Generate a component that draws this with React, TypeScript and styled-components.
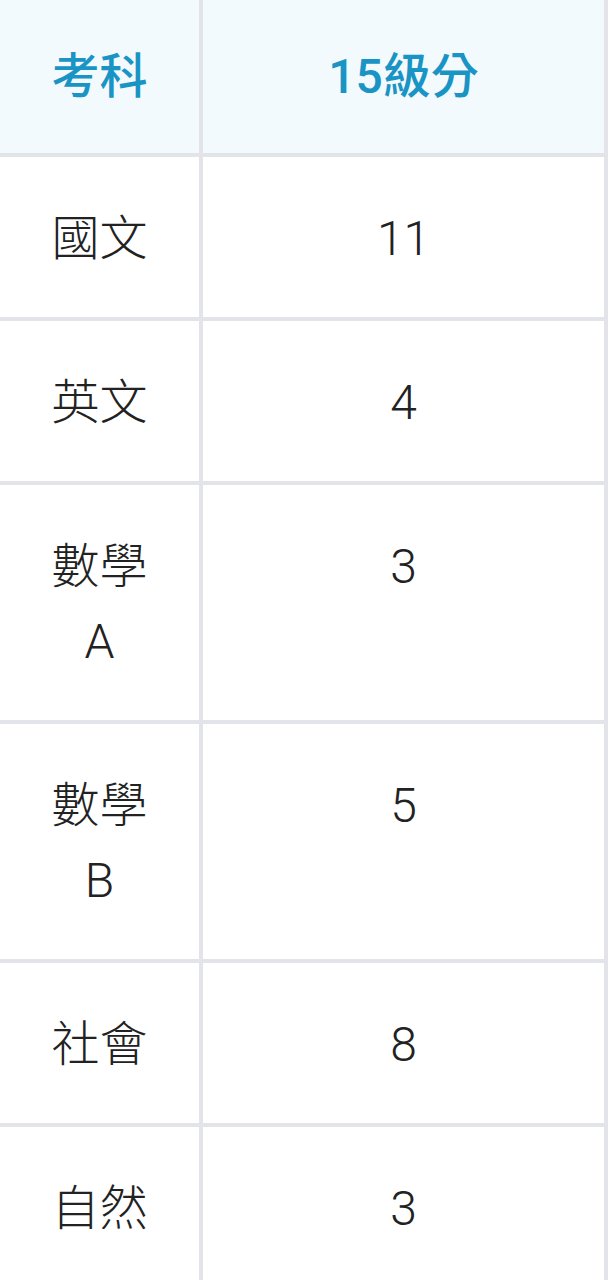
import React from 'react';
import styled, { createGlobalStyle } from 'styled-components';

// 全体
const GlobalStyle = createGlobalStyle`
  html, body {
    margin: 0;
    padding: 0;
    background: #fff;
  }
  body {
    font-family: Roboto, "Noto Sans CJK TC", sans-serif;
    color: #222;
  }
`;

const ScoreTable = styled.table`
  width: 608px;
  border-collapse: separate;
  border-spacing: 0;
  table-layout: fixed;
  font-size: 48px;
  line-height: 75px;
`;

const Col = styled.col<{ $wide?: boolean }>`
  width: ${(p) => (p.$wide ? '405px' : '203px')};
`;

const HeadCell = styled.th`
  box-sizing: border-box;
  height: 157px;
  padding: 0 40px;
  background: #f2fafe;
  color: #1a94c4;
  font-weight: 500;
  text-align: center;
  vertical-align: middle;
  border-right: 4px solid #e2e4e9;
  border-bottom: 4px solid #e2e4e9;
`;

const Cell = styled.td`
  box-sizing: border-box;
  padding: 44px 40px 41px;
  text-align: center;
  vertical-align: top;
  font-weight: 300;
  border-right: 4px solid #e2e4e9;
  border-bottom: 4px solid #e2e4e9;
`;

// データ
const rows: { subject: string; level: number }[] = [
  { subject: '國文', level: 11 },
  { subject: '英文', level: 4 },
  { subject: '數學A', level: 3 },
  { subject: '數學B', level: 5 },
  { subject: '社會', level: 8 },
  { subject: '自然', level: 3 },
];

function App() {
  return (
    <>
      <GlobalStyle />
      <ScoreTable>
        <colgroup>
          <Col />
          <Col $wide />
        </colgroup>
        <thead>
          <tr>
            <HeadCell>考科</HeadCell>
            <HeadCell>15級分</HeadCell>
          </tr>
        </thead>
        <tbody>
          {rows.map((row) => (
            <tr key={row.subject}>
              <Cell>{row.subject}</Cell>
              <Cell>{row.level}</Cell>
            </tr>
          ))}
        </tbody>
      </ScoreTable>
    </>
  );
}

export default App;
